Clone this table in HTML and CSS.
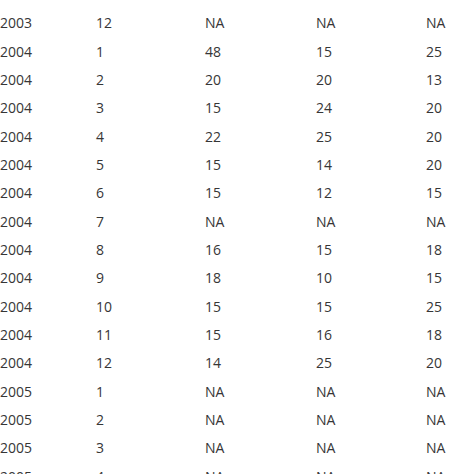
FILE: index.html
```
<!DOCTYPE html>
<html>
<head>
<meta charset="utf-8">
<link rel="stylesheet" href="styles.css">
</head>
<body>
<div class="table">
  <div class="row"><span>2003</span><span>12</span><span>NA</span><span>NA</span><span>NA</span></div>
  <div class="row"><span>2004</span><span>1</span><span>48</span><span>15</span><span>25</span></div>
  <div class="row"><span>2004</span><span>2</span><span>20</span><span>20</span><span>13</span></div>
  <div class="row"><span>2004</span><span>3</span><span>15</span><span>24</span><span>20</span></div>
  <div class="row"><span>2004</span><span>4</span><span>22</span><span>25</span><span>20</span></div>
  <div class="row"><span>2004</span><span>5</span><span>15</span><span>14</span><span>20</span></div>
  <div class="row"><span>2004</span><span>6</span><span>15</span><span>12</span><span>15</span></div>
  <div class="row"><span>2004</span><span>7</span><span>NA</span><span>NA</span><span>NA</span></div>
  <div class="row"><span>2004</span><span>8</span><span>16</span><span>15</span><span>18</span></div>
  <div class="row"><span>2004</span><span>9</span><span>18</span><span>10</span><span>15</span></div>
  <div class="row"><span>2004</span><span>10</span><span>15</span><span>15</span><span>25</span></div>
  <div class="row"><span>2004</span><span>11</span><span>15</span><span>16</span><span>18</span></div>
  <div class="row"><span>2004</span><span>12</span><span>14</span><span>25</span><span>20</span></div>
  <div class="row"><span>2005</span><span>1</span><span>NA</span><span>NA</span><span>NA</span></div>
  <div class="row"><span>2005</span><span>2</span><span>NA</span><span>NA</span><span>NA</span></div>
  <div class="row"><span>2005</span><span>3</span><span>NA</span><span>NA</span><span>NA</span></div>
  <div class="row"><span>2005</span><span>4</span><span>NA</span><span>NA</span><span>NA</span></div>
</div>
</body>
</html>
```
FILE: styles.css
```
html, body {
  margin: 0;
  padding: 0;
  background: #ffffff;
  width: 474px;
  height: 474px;
  overflow: hidden;
}
.table {
  padding-top: 9.4px;
  font-family: "Open Sans", "DejaVu Sans", sans-serif;
  font-size: 14px;
  color: #363636;
}
.row {
  display: grid;
  grid-template-columns: 96px 109px 111px 110px 1fr;
  height: 28.33px;
  line-height: 28.33px;
  white-space: nowrap;
}
```
